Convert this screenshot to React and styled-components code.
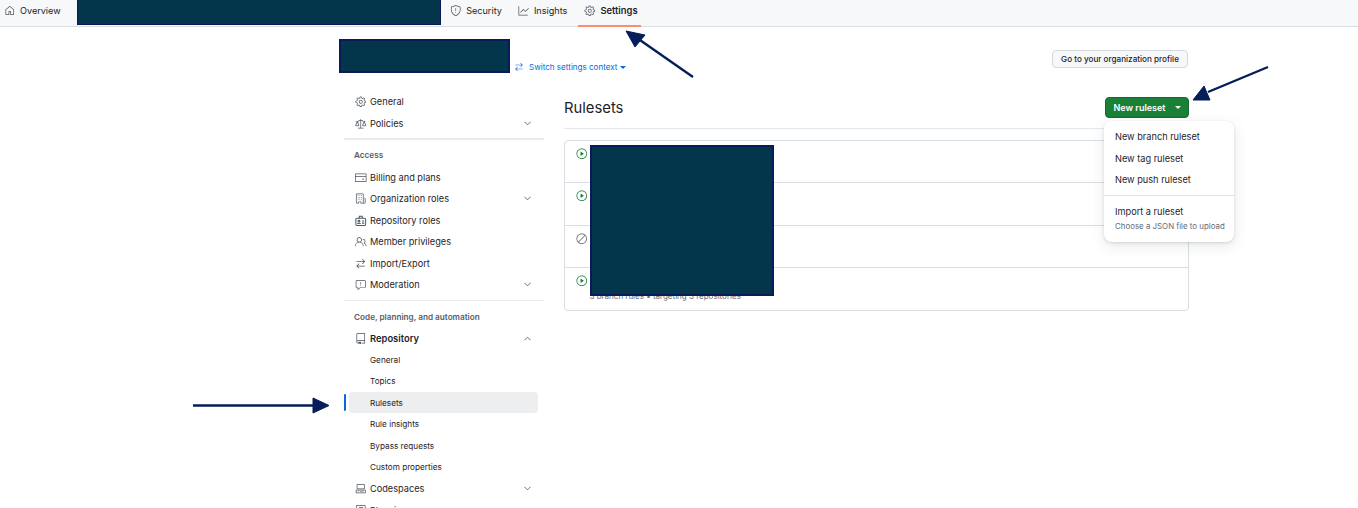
import React from "react";
import styled, { createGlobalStyle } from "styled-components";
import {
  GoHome,
  GoShield,
  GoGraph,
  GoGear,
  GoLaw,
  GoCreditCard,
  GoOrganization,
  GoPeople,
  GoArrowSwitch,
  GoReport,
  GoRepo,
  GoCodespaces,
  GoProjectRoadmap,
  GoChevronDown,
  GoChevronUp,
  GoPlay,
  GoCircleSlash,
} from "react-icons/go";

const GlobalStyle = createGlobalStyle`
  html, body {
    margin: 0;
    padding: 0;
    background: #fff;
  }
  body {
    font-family: Inter, "Liberation Sans", sans-serif;
    color: #1f2328;
  }
`;

const Page = styled.div`
  position: relative;
  width: 1358px;
  height: 508px;
  overflow: hidden;
  background: #fff;
`;

const TopNav = styled.nav`
  display: flex;
  height: 26px;
  background: #f6f8fa;
  border-bottom: 1px solid #d8dee4;
  box-sizing: content-box;
  padding-left: 4px;
`;

const Tab = styled.div`
  position: relative;
  display: flex;
  align-items: center;
  gap: 4.5px;
  height: 21px;
  padding: 0 ${(p) => (p.$active ? 3 : 4)}px 0 ${(p) => p.$pl || 0}px;
  margin-right: ${(p) => p.$mr || 0}px;
  font-size: ${(p) => (p.$active ? 9.4 : 9.1)}px;
  font-weight: ${(p) => (p.$active ? 600 : 400)};
  color: #1f2328;
  white-space: nowrap;
  svg {
    color: #4d5660;
    font-size: 11.5px;
  }
  ${(p) =>
    p.$active &&
    `
    &::after {
      content: "";
      position: absolute;
      left: 0;
      right: 0;
      top: 25px;
      height: 2px;
      background: #fd8c73;
    }
  `}
`;

const NavRedact = styled.div`
  box-sizing: border-box;
  width: 364px;
  height: 25px;
  margin: 0 9px 0 12.5px;
  background: #03364a;
  border: 1.5px solid #0b1a5a;
  border-top: 0;
`;

const Layout = styled.div`
  display: flex;
  width: 845px;
  margin-left: 344px;
  gap: 20px;
  padding-top: 49px;
  position: relative;
`;

const OrgHeader = styled.div`
  position: absolute;
  left: -5px;
  top: 12px;
  right: 0;
  display: flex;
  align-items: flex-end;
`;

const OrgRedact = styled.div`
  box-sizing: border-box;
  width: 171px;
  height: 34px;
  background: #03364a;
  border: 2px solid #0b1a5a;
`;

const SwitchLink = styled.div`
  display: flex;
  align-items: center;
  gap: 5px;
  margin: 0 0 0 4px;
  height: 12px;
  font-size: 8.05px;
  color: #0969da;
  svg {
    font-size: 10px;
  }
`;

const Caret = styled.span`
  display: inline-block;
  width: 0;
  height: 0;
  margin-left: ${(p) => p.$ml ?? -2}px;
  border-left: 3px solid transparent;
  border-right: 3px solid transparent;
  border-top: 3px solid ${(p) => p.$color || "#0969da"};
`;

const ProfileButton = styled.button`
  position: absolute;
  right: 1px;
  top: 11px;
  width: 136px;
  height: 18px;
  padding: 0;
  background: #f6f8fa;
  border: 1px solid #d5dae0;
  border-radius: 4px;
  font: 500 8.15px Inter, "Liberation Sans", sans-serif;
  color: #1f2328;
`;

const Sidebar = styled.aside`
  width: 200px;
  flex: none;
  padding-top: 15px;
`;

const Item = styled.div`
  position: relative;
  display: flex;
  align-items: center;
  height: ${(p) => (p.$bold ? 20.8 : 21.5)}px;
  margin: 0 6px 0 5px;
  padding-left: ${(p) => (p.$sub ? 21 : 6)}px;
  border-radius: 4px;
  font-size: ${(p) => (p.$sub ? 8.2 : p.$bold ? 9.4 : 9.2)}px;
  font-weight: ${(p) => (p.$bold ? 600 : 400)};
  color: #1f2328;
  background: ${(p) => (p.$selected ? "#eceef0" : "transparent")};
  ${(p) =>
    p.$selected &&
    `
    &::before {
      content: "";
      position: absolute;
      left: -5px;
      top: 2px;
      bottom: 2px;
      width: 2px;
      border-radius: 1px;
      background: #0969da;
    }
  `}
`;

const ItemIcon = styled.span`
  display: flex;
  width: 15px;
  font-size: 11.5px;
  color: #4d5660;
`;

const Chevron = styled.span`
  display: flex;
  margin-left: auto;
  margin-right: 5px;
  font-size: 11px;
  color: #57606a;
`;

const Divider = styled.hr`
  margin: 4px 0 5px;
  border: 0;
  height: 1.5px;
  background: #e9ecef;
`;

const Heading = styled.div`
  box-sizing: border-box;
  height: 22px;
  padding-bottom: 1px;
  display: flex;
  align-items: center;
  margin-left: 10px;
  font-size: 8.2px;
  font-weight: 600;
  color: #57606a;
`;

const Main = styled.main`
  flex: 1;
  min-width: 0;
`;

const Header = styled.div`
  display: flex;
  align-items: center;
  justify-content: space-between;
  height: 42px;
  margin-top: 5px;
  padding-top: 5px;
  border-bottom: 1px solid #e4e7eb;
`;

const Title = styled.h1`
  margin: 2px 0 0;
  font-size: 14.8px;
  font-weight: 400;
  color: #1f2328;
`;

const NewButton = styled.button`
  display: flex;
  align-items: center;
  justify-content: center;
  gap: 9px;
  width: 84px;
  height: 21px;
  padding: 0;
  background: #1a7f37;
  border: 1px solid #166a2e;
  border-radius: 4px;
  font: 600 9px Inter, "Liberation Sans", sans-serif;
  color: #fff;
`;

const Menu = styled.div`
  position: absolute;
  top: 94px;
  left: 760px;
  box-sizing: border-box;
  width: 130px;
  height: 121px;
  padding-top: 5px;
  background: #fff;
  border-radius: 8px;
  box-shadow: 0 1px 3px rgba(31, 35, 40, 0.14), 0 4px 14px rgba(66, 74, 83, 0.12);
  z-index: 2;
`;

const MenuItem = styled.div`
  display: flex;
  align-items: center;
  height: 21.5px;
  padding-left: 11px;
  font-size: 9.2px;
  color: #1f2328;
`;

const MenuDivider = styled.div`
  height: 1px;
  margin: 4px 0 5.5px;
  background: #dfe3e8;
`;

const MenuNote = styled.div`
  margin-top: -2px;
  padding-left: 11px;
  font-size: 7.9px;
  color: #636c76;
  white-space: nowrap;
`;

const RuleList = styled.div`
  position: relative;
  margin-top: 11px;
  border: 1px solid #d8dee4;
  border-radius: 4px;
`;

const Rule = styled.div`
  display: flex;
  gap: 3px;
  box-sizing: border-box;
  height: ${(p) => (p.$last ? 42 : 42.4)}px;
  padding: 7px 0 0 10.5px;
  border-bottom: ${(p) => (p.$last ? "0" : "1px solid #d8dee4")};
`;

const RuleIcon = styled.span`
  display: flex;
  font-size: 11.5px;
  color: ${(p) => (p.$off ? "#57606a" : "#1a7f37")};
`;

const RuleMeta = styled.div`
  align-self: flex-end;
  position: relative;
  top: -9px;
  left: -0.5px;
  font-size: 8px;
  color: #636c76;
  white-space: nowrap;
`;

const RuleRedact = styled.div`
  position: absolute;
  top: 4px;
  left: 25px;
  box-sizing: border-box;
  width: 184px;
  height: 151px;
  background: #03364a;
  border: 2px solid #0b1a5a;
`;

const Arrow = styled.svg`
  position: absolute;
  left: 0;
  top: 0;
  z-index: 3;
  pointer-events: none;
`;

const BadgeIcon = () => (
  <svg viewBox="0 0 16 16" width="1em" height="1em" fill="none" stroke="currentColor" strokeWidth="1.4">
    <rect x="1.2" y="4.5" width="13.6" height="10" rx="1.5" />
    <path d="M6 4.5V1.8h4v2.7" />
    <circle cx="5.5" cy="8.6" r="1.3" />
    <path d="M3.3 12.4c.5-1.4 3.9-1.4 4.4 0M9.8 8.5h3M9.8 11.3h3" />
  </svg>
);

const sideTop = [
  { icon: GoGear, label: "General" },
  { icon: GoLaw, label: "Policies", more: true },
];
const sideAccess = [
  { icon: GoCreditCard, label: "Billing and plans" },
  { icon: GoOrganization, label: "Organization roles", more: true },
  { icon: BadgeIcon, label: "Repository roles" },
  { icon: GoPeople, label: "Member privileges" },
  { icon: GoArrowSwitch, label: "Import/Export" },
  { icon: GoReport, label: "Moderation", more: true },
];
const repoLinks = ["General", "Topics", "Rulesets", "Rule insights", "Bypass requests", "Custom properties"];
const rules = [{}, {}, { off: true }, { meta: "3 branch rules • targeting 3 repositories", last: true }];

const SideItem = ({ icon: Icon, label, more }) => (
  <Item>
    <ItemIcon>
      <Icon />
    </ItemIcon>
    {label}
    {more && (
      <Chevron>
        <GoChevronDown />
      </Chevron>
    )}
  </Item>
);

export default function App() {
  return (
    <Page>
      <GlobalStyle />
      <TopNav>
        <Tab>
          <GoHome />
          Overview
        </Tab>
        <NavRedact />
        <Tab $mr={12}>
          <GoShield />
          Security
        </Tab>
        <Tab $mr={7}>
          <GoGraph />
          Insights
        </Tab>
        <Tab $active $pl={6}>
          <GoGear />
          Settings
        </Tab>
      </TopNav>

      <Layout>
        <OrgHeader>
          <OrgRedact />
          <SwitchLink>
            <GoArrowSwitch />
            Switch settings context
            <Caret />
          </SwitchLink>
          <ProfileButton>Go to your organization profile</ProfileButton>
        </OrgHeader>

        <Sidebar>
          {sideTop.map((it) => (
            <SideItem key={it.label} {...it} />
          ))}
          <Divider />
          <Heading>Access</Heading>
          {sideAccess.map((it) => (
            <SideItem key={it.label} {...it} />
          ))}
          <Divider />
          <Heading>Code, planning, and automation</Heading>
          <Item $bold>
            <ItemIcon>
              <GoRepo />
            </ItemIcon>
            Repository
            <Chevron>
              <GoChevronUp />
            </Chevron>
          </Item>
          {repoLinks.map((label) => (
            <Item key={label} $sub $selected={label === "Rulesets"}>
              {label}
            </Item>
          ))}
          <SideItem icon={GoCodespaces} label="Codespaces" more />
          <SideItem icon={GoProjectRoadmap} label="Planning" />
        </Sidebar>

        <Main>
          <Header>
            <Title>Rulesets</Title>
            <NewButton>
              New ruleset
              <Caret $color="#fff" $ml={0} />
            </NewButton>
          </Header>
          <RuleList>
            {rules.map((r, i) => (
              <Rule key={i} $last={r.last}>
                <RuleIcon $off={r.off}>{r.off ? <GoCircleSlash /> : <GoPlay />}</RuleIcon>
                {r.meta && <RuleMeta>{r.meta}</RuleMeta>}
              </Rule>
            ))}
            <RuleRedact />
          </RuleList>
          <Menu>
            <MenuItem>New branch ruleset</MenuItem>
            <MenuItem>New tag ruleset</MenuItem>
            <MenuItem>New push ruleset</MenuItem>
            <MenuDivider />
            <MenuItem>Import a ruleset</MenuItem>
            <MenuNote>Choose a JSON file to upload</MenuNote>
          </Menu>
        </Main>
      </Layout>

      <Arrow width="1358" height="508" viewBox="0 0 1358 508">
        <g fill="#051d59" stroke="#051d59">
          <line x1="693" y1="77" x2="637" y2="38" strokeWidth="2.4" />
          <polygon points="626,31 645,35 635,47" />
          <line x1="1268" y1="67" x2="1208" y2="92" strokeWidth="2.4" />
          <polygon points="1193,100 1204,86 1210,100" />
          <line x1="193" y1="405.5" x2="316" y2="405.5" strokeWidth="2.6" />
          <polygon points="329,405.5 313,398 313,413" />
        </g>
      </Arrow>
    </Page>
  );
}
